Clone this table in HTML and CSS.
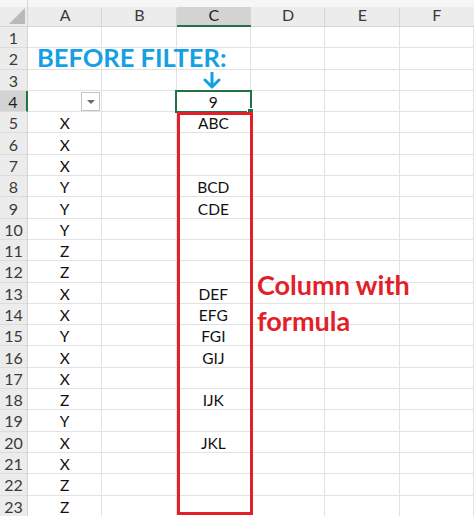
FILE: index.html
```html
<!DOCTYPE html>
<html>
<head>
<meta charset="utf-8">
<link rel="stylesheet" href="styles.css">
</head>
<body>
<div class="wrap">
  <div class="sheet">
    <div class="hd corner"><span class="tri"></span></div>
    <div class="hd col">A</div><div class="hd col">B</div><div class="hd col sel-col">C</div><div class="hd col">D</div><div class="hd col">E</div><div class="hd col last">F</div>

    <div class="rn">1</div><div class="c"></div><div class="c"></div><div class="c"></div><div class="c"></div><div class="c"></div><div class="c"></div>
    <div class="rn">2</div><div class="c"></div><div class="c"></div><div class="c"></div><div class="c"></div><div class="c"></div><div class="c"></div>
    <div class="rn">3</div><div class="c"></div><div class="c"></div><div class="c"></div><div class="c"></div><div class="c"></div><div class="c"></div>
    <div class="rn sel-row">4</div><div class="c filter"><span class="dd"><span class="ddtri"></span></span></div><div class="c"></div><div class="c">9</div><div class="c"></div><div class="c"></div><div class="c"></div>
    <div class="rn">5</div><div class="c">X</div><div class="c"></div><div class="c">ABC</div><div class="c"></div><div class="c"></div><div class="c"></div>
    <div class="rn">6</div><div class="c">X</div><div class="c"></div><div class="c"></div><div class="c"></div><div class="c"></div><div class="c"></div>
    <div class="rn">7</div><div class="c">X</div><div class="c"></div><div class="c"></div><div class="c"></div><div class="c"></div><div class="c"></div>
    <div class="rn">8</div><div class="c">Y</div><div class="c"></div><div class="c">BCD</div><div class="c"></div><div class="c"></div><div class="c"></div>
    <div class="rn">9</div><div class="c">Y</div><div class="c"></div><div class="c">CDE</div><div class="c"></div><div class="c"></div><div class="c"></div>
    <div class="rn">10</div><div class="c">Y</div><div class="c"></div><div class="c"></div><div class="c"></div><div class="c"></div><div class="c"></div>
    <div class="rn">11</div><div class="c">Z</div><div class="c"></div><div class="c"></div><div class="c"></div><div class="c"></div><div class="c"></div>
    <div class="rn">12</div><div class="c">Z</div><div class="c"></div><div class="c"></div><div class="c"></div><div class="c"></div><div class="c"></div>
    <div class="rn">13</div><div class="c">X</div><div class="c"></div><div class="c">DEF</div><div class="c"></div><div class="c"></div><div class="c"></div>
    <div class="rn">14</div><div class="c">X</div><div class="c"></div><div class="c">EFG</div><div class="c"></div><div class="c"></div><div class="c"></div>
    <div class="rn">15</div><div class="c">Y</div><div class="c"></div><div class="c">FGI</div><div class="c"></div><div class="c"></div><div class="c"></div>
    <div class="rn">16</div><div class="c">X</div><div class="c"></div><div class="c">GIJ</div><div class="c"></div><div class="c"></div><div class="c"></div>
    <div class="rn">17</div><div class="c">X</div><div class="c"></div><div class="c"></div><div class="c"></div><div class="c"></div><div class="c"></div>
    <div class="rn">18</div><div class="c">Z</div><div class="c"></div><div class="c">IJK</div><div class="c"></div><div class="c"></div><div class="c"></div>
    <div class="rn">19</div><div class="c">Y</div><div class="c"></div><div class="c"></div><div class="c"></div><div class="c"></div><div class="c"></div>
    <div class="rn">20</div><div class="c">X</div><div class="c"></div><div class="c">JKL</div><div class="c"></div><div class="c"></div><div class="c"></div>
    <div class="rn">21</div><div class="c">X</div><div class="c"></div><div class="c"></div><div class="c"></div><div class="c"></div><div class="c"></div>
    <div class="rn">22</div><div class="c">Z</div><div class="c"></div><div class="c"></div><div class="c"></div><div class="c"></div><div class="c"></div>
    <div class="rn">23</div><div class="c">Z</div><div class="c"></div><div class="c"></div><div class="c"></div><div class="c"></div><div class="c"></div>
  </div>

  <div class="before">BEFORE FILTER:</div>
  <svg class="arrow" width="18" height="18" viewBox="0 0 18 18">
    <path d="M9 1 V15 M2 8 L9 15 L16 8" fill="none" stroke="#14a0e3" stroke-width="3" stroke-linecap="round" stroke-linejoin="round"/>
  </svg>
  <div class="active"><span class="handle"></span></div>
  <div class="redbox"></div>
  <div class="note">Column with<br>formula</div>
</div>
</body>
</html>
```
FILE: styles.css
```css
html, body {
  margin: 0;
  padding: 0;
  background: #ffffff;
}
body {
  width: 474px;
  height: 516px;
  overflow: hidden;
  font-family: Lato, "Open Sans", sans-serif;
}
.wrap {
  position: relative;
  width: 474px;
  height: 516px;
  overflow: hidden;
}
.sheet {
  display: grid;
  grid-template-columns: 28px repeat(6, 1fr);
  grid-template-rows: 27px repeat(23, 21.3px);
  width: 474px;
}
.hd {
  box-sizing: border-box;
  background: linear-gradient(#f6f6f6 0, #f6f6f6 7px, #ececec 7px);
  border-bottom: 1px solid #d4d4d4;
  color: #3a3a3a;
  font-size: 16px;
  display: flex;
  align-items: flex-end;
  justify-content: center;
  padding-bottom: 2px;
  position: relative;
}
.col::after {
  content: "";
  position: absolute;
  right: 0;
  top: 8px;
  bottom: 0;
  width: 1px;
  background: #d6d6d6;
}
.col.last::after { display: none; }
.corner {
  border-right: 1px solid #d4d4d4;
}
.tri {
  position: absolute;
  right: 2px;
  bottom: 2px;
  width: 0;
  height: 0;
  border-left: 16px solid transparent;
  border-bottom: 16px solid #b9b9b9;
}
.sel-col {
  background: linear-gradient(#f6f6f6 0, #f6f6f6 7px, #d3d3d3 7px);
  border-bottom: 2px solid #217346;
  color: #1f1f1f;
  padding-bottom: 1px;
}
.rn {
  box-sizing: border-box;
  background: #ececec;
  border-right: 1px solid #d4d4d4;
  border-bottom: 1px solid #dcdcdc;
  color: #3a3a3a;
  font-size: 16px;
  display: flex;
  align-items: center;
  justify-content: center;
  padding-top: 1px;
}
.sel-row {
  background: #d3d3d3;
  border-right: 2px solid #217346;
  color: #1f1f1f;
}
.c {
  box-sizing: border-box;
  border-right: 1px solid #e2e2e2;
  border-bottom: 1px solid #e2e2e2;
  font-size: 15.5px;
  color: #111111;
  display: flex;
  align-items: center;
  justify-content: center;
  padding-top: 2px;
}
.filter {
  justify-content: flex-end;
  padding: 1px 1px 0 0;
}
.dd {
  box-sizing: border-box;
  width: 19px;
  height: 19px;
  border: 1px solid #c3c3c3;
  background: #ffffff;
  display: flex;
  align-items: center;
  justify-content: center;
}
.ddtri {
  width: 0;
  height: 0;
  border-left: 4px solid transparent;
  border-right: 4px solid transparent;
  border-top: 4px solid #6b6b6b;
}
.before {
  position: absolute;
  left: 37px;
  top: 42px;
  font-size: 25.5px;
  font-weight: 700;
  color: #14a0e3;
  white-space: nowrap;
  letter-spacing: 0;
}
.arrow {
  position: absolute;
  left: 203px;
  top: 72px;
}
.active {
  position: absolute;
  left: 175px;
  top: 90px;
  width: 77px;
  height: 23px;
  box-sizing: border-box;
  border: 2px solid #217346;
}
.handle {
  position: absolute;
  right: -4px;
  bottom: -4px;
  width: 5px;
  height: 5px;
  background: #217346;
  border: 1px solid #ffffff;
}
.redbox {
  position: absolute;
  left: 177px;
  top: 112px;
  width: 76px;
  height: 403px;
  box-sizing: border-box;
  border: 3.5px solid #e3202a;
}
.note {
  position: absolute;
  left: 257px;
  top: 267px;
  font-size: 27px;
  line-height: 36px;
  font-weight: 700;
  color: #e3202a;
  white-space: nowrap;
}
```
